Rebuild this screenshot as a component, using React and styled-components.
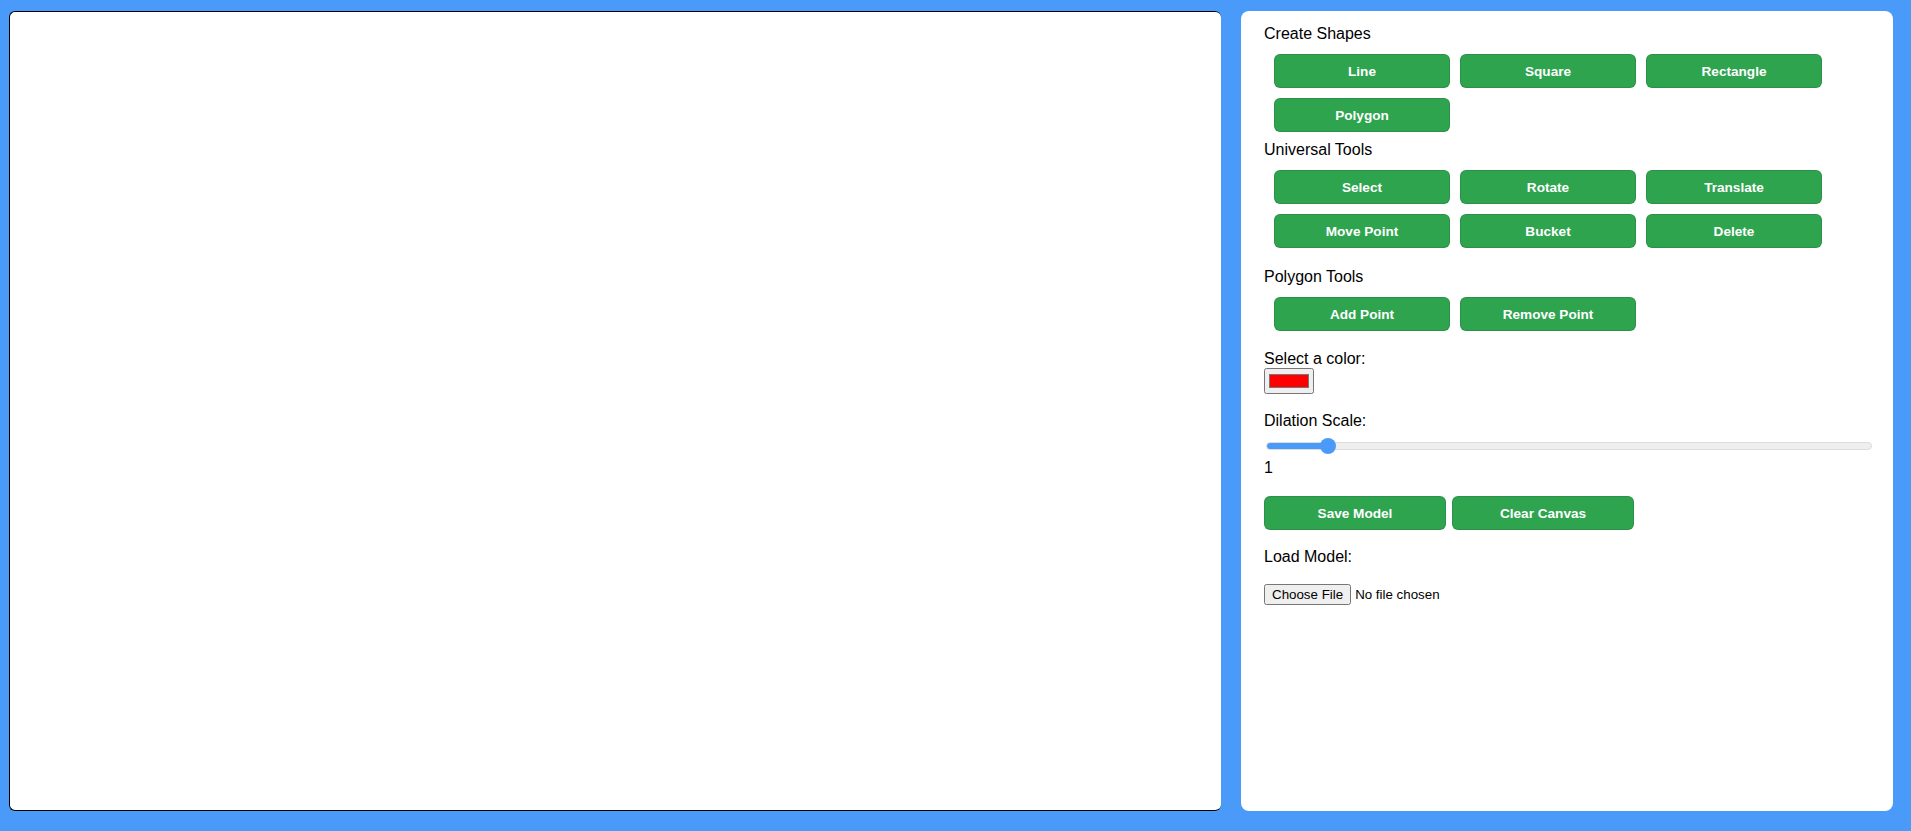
import React, { useState } from "react";
import styled, { createGlobalStyle } from "styled-components";

const BLUE = "#4a9af9";

const GlobalStyle = createGlobalStyle`
  html, body {
    margin: 0;
    padding: 0;
    background: ${BLUE};
    font-family: "Liberation Sans", Arial, sans-serif;
  }
`;

const Page = styled.div`
  display: flex;
  align-items: flex-start;
  gap: 20px;
  padding: 11px 18px 20px 9px;
  background: ${BLUE};
`;

const CanvasArea = styled.div`
  box-sizing: border-box;
  width: 1212px;
  height: 800px;
  flex: none;
  background: #fff;
  border: 1px solid #000;
  border-right: none;
  border-radius: 6px;
`;

const Panel = styled.div`
  box-sizing: border-box;
  width: 652px;
  height: 800px;
  flex: none;
  background: #fff;
  border-radius: 8px;
  padding: 14px 19px 0 23px;
  color: #000;
`;

const Title = styled.div`
  font-size: 16px;
  line-height: 18px;
  margin-top: ${(p) => p.$mt || 0}px;
`;

const ButtonGroup = styled.div`
  display: flex;
  flex-wrap: wrap;
  padding: 6px 5px 4px;
`;

const ToolButton = styled.button`
  box-sizing: border-box;
  width: ${(p) => p.$w || 176}px;
  height: 34px;
  margin: ${(p) => (p.$flush ? 0 : "5px")};
  background: #2ea44f;
  border: 1px solid rgba(27, 31, 35, 0.15);
  border-radius: 6px;
  color: #fff;
  font-family: "Liberation Sans", Arial, sans-serif;
  font-weight: 700;
  font-size: 13.6px;
  cursor: pointer;
  padding: 0;
`;

const ActionRow = styled.div`
  display: flex;
  gap: 6px;
  margin-top: 19px;
`;

const ColorInput = styled.input`
  display: block;
  box-sizing: border-box;
  width: 50px;
  height: 26px;
  margin: 0;
`;

const Range = styled.input`
  -webkit-appearance: none;
  appearance: none;
  display: block;
  box-sizing: border-box;
  width: calc(100% - 4px);
  height: 8px;
  margin: 12px 2px 9px;
  border: 1px solid #dcdcdc;
  border-radius: 4px;
  outline: none;
  background: #efefef;

  &::-webkit-slider-thumb {
    -webkit-appearance: none;
    appearance: none;
    width: 16px;
    height: 16px;
    border-radius: 50%;
    background: ${BLUE};
    border: none;
    cursor: pointer;
  }
`;

const Value = styled.div`
  font-size: 16px;
  line-height: 18px;
`;

const FileInput = styled.input`
  display: block;
  margin-top: 18px;
  font-family: "Liberation Sans", Arial, sans-serif;
  font-size: 13.33px;
`;

export default function App() {
  const [scale, setScale] = useState(1);
  const [color, setColor] = useState("#ff0000");
  const frac = (scale - 0.1) / 9.9;
  const fill = `calc(7px + (100% - 14px) * ${frac})`;
  return (
    <>
      <GlobalStyle />
      <Page>
        <CanvasArea />
        <Panel>
          <Title>Create Shapes</Title>
          <ButtonGroup>
            <ToolButton>Line</ToolButton>
            <ToolButton>Square</ToolButton>
            <ToolButton>Rectangle</ToolButton>
            <ToolButton>Polygon</ToolButton>
          </ButtonGroup>
          <Title>Universal Tools</Title>
          <ButtonGroup>
            <ToolButton>Select</ToolButton>
            <ToolButton>Rotate</ToolButton>
            <ToolButton>Translate</ToolButton>
            <ToolButton>Move Point</ToolButton>
            <ToolButton>Bucket</ToolButton>
            <ToolButton>Delete</ToolButton>
          </ButtonGroup>
          <Title $mt={11}>Polygon Tools</Title>
          <ButtonGroup>
            <ToolButton>Add Point</ToolButton>
            <ToolButton>Remove Point</ToolButton>
          </ButtonGroup>
          <Title $mt={10}>Select a color:</Title>
          <ColorInput
            type="color"
            value={color}
            onChange={(e) => setColor(e.target.value)}
          />
          <Title $mt={18}>Dilation Scale:</Title>
          <Range
            type="range"
            min="0.1"
            max="10"
            step="0.1"
            value={scale}
            onChange={(e) => setScale(Number(e.target.value))}
            style={{
              background: `linear-gradient(to right, ${BLUE} 0, ${BLUE} ${fill}, #efefef ${fill}, #efefef 100%)`,
            }}
          />
          <Value>{scale}</Value>
          <ActionRow>
            <ToolButton $flush $w={182}>Save Model</ToolButton>
            <ToolButton $flush $w={182}>Clear Canvas</ToolButton>
          </ActionRow>
          <Title $mt={18}>Load Model:</Title>
          <FileInput type="file" />
        </Panel>
      </Page>
    </>
  );
}
